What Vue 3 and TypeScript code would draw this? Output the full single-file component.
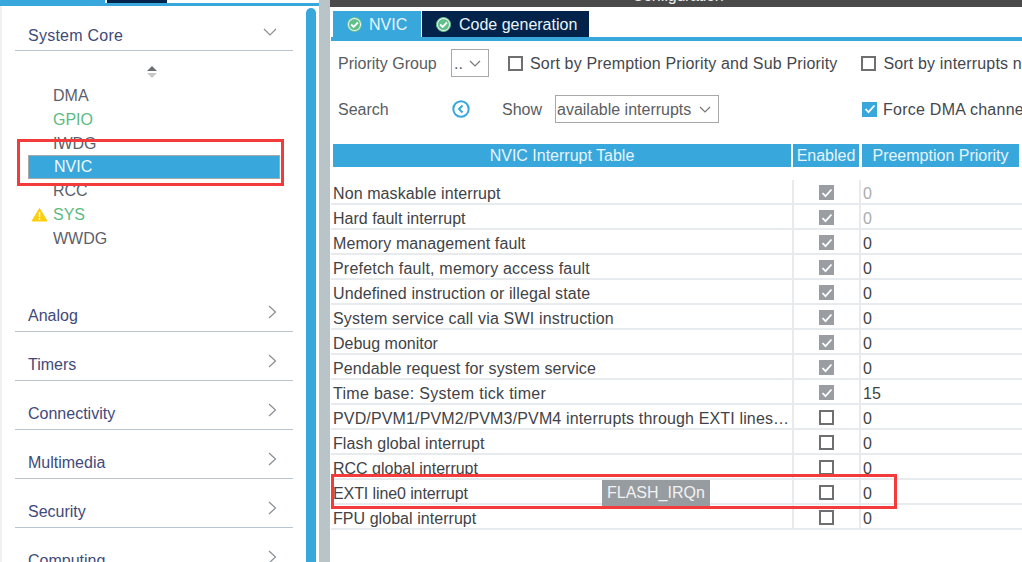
<script setup lang="ts">
const periph = [
  { name: 'DMA', cls: '' },
  { name: 'GPIO', cls: 'ok' },
  { name: 'IWDG', cls: '' },
  { name: 'NVIC', cls: 'sel' },
  { name: 'RCC', cls: '' },
  { name: 'SYS', cls: 'ok warn' },
  { name: 'WWDG', cls: '' },
]
const cats = ['Analog', 'Timers', 'Connectivity', 'Multimedia', 'Security', 'Computing']
const rows = [
  { n: 'Non maskable interrupt', on: true, p: '0', dim: true, ls: 0.1 },
  { n: 'Hard fault interrupt', on: true, p: '0', dim: true, ls: 0 },
  { n: 'Memory management fault', on: true, p: '0', ls: 0.1 },
  { n: 'Prefetch fault, memory access fault', on: true, p: '0', ls: 0.2 },
  { n: 'Undefined instruction or illegal state', on: true, p: '0', ls: 0.1 },
  { n: 'System service call via SWI instruction', on: true, p: '0', ls: 0.18 },
  { n: 'Debug monitor', on: true, p: '0', ls: 0 },
  { n: 'Pendable request for system service', on: true, p: '0', ls: 0.12 },
  { n: 'Time base: System tick timer', on: true, p: '15', ls: 0.3 },
  { n: 'PVD/PVM1/PVM2/PVM3/PVM4 interrupts through EXTI lines…', on: false, p: '0', ls: 0.15 },
  { n: 'Flash global interrupt', on: false, p: '0', ls: 0.1 },
  { n: 'RCC global interrupt', on: false, p: '0', ls: 0 },
  { n: 'EXTI line0 interrupt', on: false, p: '0', tip: 'FLASH_IRQn', ls: -0.1 },
  { n: 'FPU global interrupt', on: false, p: '0', ls: 0.05 },
]
</script>

<template>
  <div class="app">
    <aside class="left">
      <div class="ltabs"><span class="lt1"></span><span class="lt2"></span></div>
      <div class="lbody">
        <div class="list">
          <div class="cat first">
            <span>System Core</span>
            <svg width="14" height="9" viewBox="0 0 14 9"><path d="M1 1l6 6 6-6" fill="none" stroke="#8a8f94" stroke-width="1.2"/></svg>
          </div>
          <div class="sorter">
            <svg width="12" height="14" viewBox="0 0 12 14"><path d="M6 1l5 5H1z" fill="#6d7073"/><path d="M6 13l5-5H1z" fill="#c6c8ca"/></svg>
          </div>
          <ul class="periph">
            <li v-for="p in periph" :key="p.name" :class="p.cls">
              <svg v-if="p.name === 'SYS'" class="warnic" width="17" height="15" viewBox="0 0 17 15"><path d="M8.500 1.500L16 14H1z" fill="#fdcf0a" stroke="#fdcf0a" stroke-width="1" stroke-linejoin="round"/><path d="M8.500 5v5M8.500 11v1.800" stroke="#fff" stroke-width="1.500"/></svg>
              {{ p.name }}
            </li>
          </ul>
          <div class="cats">
            <div v-for="c in cats" :key="c" class="cat">
              <span>{{ c }}</span>
              <svg width="9" height="14" viewBox="0 0 9 14"><path d="M1 1l6.500 6L1 13" fill="none" stroke="#8a8f94" stroke-width="1.200"/></svg>
            </div>
          </div>
        </div>
        <div class="lscroll"></div>
      </div>
    </aside>
    <div class="gutter"></div>
    <main class="right">
      <div class="title"><span>Configuration</span></div>
      <div class="tabs">
        <div class="tab active">
          <svg width="15" height="15" viewBox="0 0 15 15"><circle cx="7.500" cy="7.500" r="7" fill="#eef8f3" stroke="#5fc08a" stroke-width="1"/><circle cx="7.500" cy="7.500" r="5.500" fill="#5fc08a"/><path d="M4.200 7.500l2.400 2.400 4.300-4.400" fill="none" stroke="#fff" stroke-width="1.800"/></svg>
          NVIC
        </div>
        <div class="tab dark">
          <svg width="15" height="15" viewBox="0 0 15 15"><circle cx="7.500" cy="7.500" r="7" fill="#eef8f3" stroke="#5fc08a" stroke-width="1"/><circle cx="7.500" cy="7.500" r="5.500" fill="#5fc08a"/><path d="M4.200 7.500l2.400 2.400 4.300-4.400" fill="none" stroke="#fff" stroke-width="1.800"/></svg>
          <span class="cg">Code generation</span>
        </div>
      </div>
      <div class="form">
        <div class="frow r1">
          <span class="lab l1">Priority Group</span>
          <div class="sel small"><span>..</span><svg width="12" height="7" viewBox="0 0 12 7"><path d="M1 1l5 5 5-5" fill="none" stroke="#777" stroke-width="1.200"/></svg></div>
          <label class="chk c1"><i class="box"></i>Sort by Premption Priority and Sub Priority</label>
          <label class="chk c2"><i class="box"></i>Sort by interrupts names</label>
        </div>
        <div class="frow r2">
          <span class="lab l2">Search</span>
          <svg class="back" width="18" height="18" viewBox="0 0 18 18"><circle cx="9" cy="9" r="7.700" fill="none" stroke="#38a8dc" stroke-width="2"/><path d="M10.500 5.500L7 9l3.500 3.500" fill="none" stroke="#38a8dc" stroke-width="2"/></svg>
          <span class="lab l3">Show</span>
          <div class="sel wide"><span>available interrupts</span><svg width="12" height="7" viewBox="0 0 12 7"><path d="M1 1l5 5 5-5" fill="none" stroke="#777" stroke-width="1.200"/></svg></div>
          <label class="chk c3">
            <i class="box on"><svg width="14" height="14" viewBox="0 0 14 14"><path d="M2.500 7l3 3.200 6-6.700" fill="none" stroke="#fff" stroke-width="1.800"/></svg></i>
            Force DMA channels Interrupts
          </label>
        </div>
      </div>
      <div class="thead">
        <div class="th c-name">NVIC Interrupt Table</div>
        <div class="th c-en">Enabled</div>
        <div class="th c-pr">Preemption Priority</div>
      </div>
      <div class="tbody">
        <div v-for="r in rows" :key="r.n" class="tr">
          <div class="td c-name">
            <span class="nm" :style="{ letterSpacing: r.ls + 'px' }">{{ r.n }}</span>
            <span v-if="r.tip" class="tip">{{ r.tip }}</span>
          </div>
          <div class="td c-en">
            <i class="box" :class="{ dis: r.on }"><svg v-if="r.on" width="14" height="14" viewBox="0 0 14 14"><path d="M2.500 7l3 3.200 6-6.700" fill="none" stroke="#fff" stroke-width="1.800"/></svg></i>
          </div>
          <div class="td c-pr" :class="{ dim: r.dim }">{{ r.p }}</div>
        </div>
      </div>
    </main>
    <div class="mark m1"></div>
    <div class="mark m2"></div>
  </div>
</template>

<style>
html, body { margin: 0; overflow: hidden; background: #fff; }
</style>

<style scoped>
.app {
  position: relative;
  display: flex;
  width: 1022px;
  height: 562px;
  overflow: hidden;
  background: #fff;
  font-family: "Liberation Sans", Arial, sans-serif;
  font-size: 16px;
  color: #3f4347;
}
.left { width: 319px; flex: none; display: flex; flex-direction: column; }
.ltabs { height: 6px; flex: none; position: relative; background: linear-gradient(#fff 3px, #38a8dc 3px); }
.lt1 { position: absolute; left: 0; top: 0; width: 105px; height: 6px; background: #38a8dc; }
.lt2 { position: absolute; left: 107px; top: 0; width: 60px; height: 3px; background: #04234a; }
.lbody { flex: 1; display: flex; border-left: 2px solid #eef0f1; min-height: 0; }
.list { width: 304px; box-sizing: border-box; padding-left: 13px; flex: none; }
.cat {
  display: flex;
  justify-content: space-between;
  align-items: center;
  width: 278px;
  height: 30px;
  padding: 0 16px 0 13px;
  box-sizing: border-box;
  border-bottom: 1px solid #b9c4cc;
  color: #3f4a7a;
  margin-top: 19px;
}
.cat svg { margin-bottom: 8px; }
.cat.first { margin-top: 15px; letter-spacing: .25px; }
.cat.first svg { margin-bottom: 6px; }
.sorter { height: 17px; margin-top: 14px; padding-left: 131px; }
.periph { list-style: none; margin: 2px 0 0; padding: 0 0 0 13px; width: 265px; box-sizing: border-box; }
.periph li { position: relative; height: 23.8px; line-height: 24px; padding-left: 25px; color: #5c5f6b; }
.periph li.ok { color: #5cbb83; }
.periph li.sel { background: #38a8dc; color: #f0f8fd; }
.warnic { position: absolute; left: 3px; top: 4px; }
.cats { margin-top: 51px; }
.cats .cat:first-child { margin-top: 0; }
.lscroll { width: 10px; margin-top: 2px; background: #38a8dc; border-radius: 5px 5px 0 0; flex: none; }
.gutter { width: 11px; flex: none; background: #b8c4c8; }
.right { flex: 1; min-width: 0; padding-left: 1px; display: flex; flex-direction: column; }
.title { height: 7px; margin-left: -1px; background: #4a4a4a; color: #eee; position: relative; overflow: hidden; }
.title span { position: absolute; left: 302px; top: -13px; font-size: 16px; letter-spacing: -.3px; }
.tabs { display: flex; gap: 1px; height: 26px; margin-top: 4px; padding-left: 2px; border-bottom: 4px solid #38a8dc; }
.tab { display: flex; align-items: center; gap: 7px; color: #e9f5fb; padding-top: 1px; box-sizing: border-box; }
.tab.active { width: 88px; background: #38a8dc; padding-left: 14px; }
.tab.dark { width: 167px; background: #04234a; padding-left: 14px; gap: 8px; }
.form { height: 103px; box-sizing: border-box; padding: 7px 0 0 7px; }
.frow { position: relative; display: flex; align-items: center; height: 30px; white-space: nowrap; }
.frow > * { flex: none; }
.r2 { margin-top: 16px; }
.lab { color: #585c62; padding-top: 2px; }
.l1 { width: 113px; }
.sel { display: flex; align-items: center; justify-content: space-between; border: 1px solid #a6a8aa; box-sizing: border-box; height: 28px; padding: 0 7px 0 1px; color: #5b5e63; }
.sel span { padding-top: 2px; }
.small { width: 38px; padding-left: 2px; }
.wide { width: 164px; margin-left: 12px; }
.chk { display: flex; align-items: center; gap: 7px; color: #44484d; padding-top: 2px; }
.chk .box { margin-top: -2px; }
.c1 { margin-left: 19px; letter-spacing: .16px; }
.c2 { margin-left: 24px; letter-spacing: .16px; }
.c3 { margin-left: 143px; gap: 6px; letter-spacing: .25px; }
.l2 { width: 114px; }
.back { margin-right: 32px; }
.l3 { width: 41px; }
.box {
  display: inline-flex;
  width: 15px;
  height: 15px;
  box-sizing: border-box;
  border: 2px solid #6e6f71;
  background: #fff;
  flex: none;
  align-items: center;
  justify-content: center;
}
.box svg { flex: none; }
.box.on { background: #38a8dc; border: 0; }
.box.dis { background: #9a9ea3; border: 0; }
.thead { display: flex; height: 23px; padding-left: 2px; }
.th { background: #38a8dc; color: #e7f4fb; text-align: center; line-height: 23px; }
.thead .c-name { width: 458px; margin-right: 2px; }
.thead .c-en { width: 66px; margin-right: 3px; white-space: nowrap; }
.thead .c-pr { width: 157px; }
.tbody { margin-top: 13px; }
.tr { display: flex; height: 25px; box-sizing: border-box; border-bottom: 2px solid #e8ebee; }
.td { position: relative; line-height: 27px; white-space: nowrap; }
.tbody .c-name { width: 461px; padding-left: 2px; box-sizing: border-box; color: #3f4347; }
.tbody .c-en { width: 69px; box-sizing: border-box; padding-top: 2px; border-left: 2px solid #e8ebee; border-right: 2px solid #e8ebee; display: flex; align-items: center; justify-content: center; }
.tbody .c-pr { padding-left: 2px; }
.dim { color: #a9adb1; }
.tip {
  position: absolute;
  left: 271px;
  top: 0;
  height: 26px;
  width: 108px;
  box-sizing: border-box;
  background: #979ca1;
  color: #f2f2f2;
  padding-left: 5px;
  line-height: 26px;
  z-index: 1;
}
.mark { position: absolute; border: 3px solid #f33b3b; box-sizing: border-box; pointer-events: none; }
.m1 { left: 17px; top: 139px; width: 267px; height: 47px; }
.m2 { left: 331px; top: 474px; width: 566px; height: 35px; }
</style>
